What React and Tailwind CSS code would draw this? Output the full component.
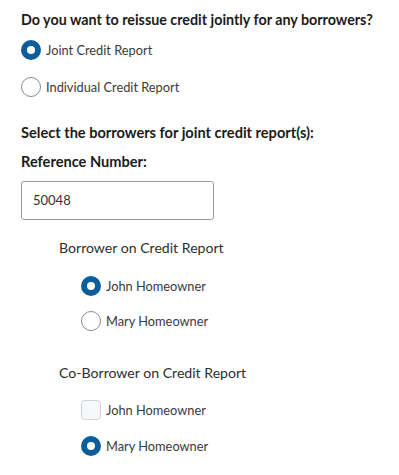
import React from "react";

const font = { fontFamily: "Lato, 'Noto Sans', sans-serif" };

function Radio({ checked }) {
  return checked ? (
    <span className="box-border inline-block h-[20px] w-[20px] shrink-0 rounded-full border-[6px] border-[#0b5e9b] bg-white" />
  ) : (
    <span className="box-border inline-block h-[20px] w-[20px] shrink-0 rounded-full border border-[#8a8a8a] bg-white" />
  );
}

function Checkbox() {
  return <span className="box-border inline-block h-[20px] w-[20px] shrink-0 rounded-[4px] border border-[#cfd3d8] bg-[#f7f8fa]" />;
}

function Option({ control, label, className }) {
  return (
    <div className={"flex h-[20px] items-center gap-[5px] " + className}>
      {control}
      <span className="text-[12.8px] leading-[20px] text-[#3a3a3a]">{label}</span>
    </div>
  );
}

export default function App() {
  return (
    <div className="h-[475px] w-[399px] bg-white pl-[21px]" style={font}>
      <div className="flex flex-col pt-[10px]">
        <div className="h-[20px] text-[14.3px] font-bold leading-[20px] text-[#1b1b1b]">
          Do you want to reissue credit jointly for any borrowers?
        </div>
        <Option className="mt-[10px]" control={<Radio checked />} label="Joint Credit Report" />
        <Option className="mt-[17px]" control={<Radio />} label="Individual Credit Report" />
        <div className="mt-[26px] h-[20px] text-[14.6px] font-bold leading-[20px] text-[#1b1b1b]">
          Select the borrowers for joint credit report(s):
        </div>
        <div className="mt-[9px] h-[20px] text-[14.6px] font-bold leading-[20px] text-[#1b1b1b]">
          Reference Number:
        </div>
        <div className="mt-[9px] box-border flex h-[39px] w-[193px] items-center rounded-[3px] border border-[#9a9a9a] pl-[11px] text-[13px] text-[#333]">
          50048
        </div>
        <div className="ml-[38px] mt-[18px] h-[20px] text-[14.1px] leading-[20px] text-[#2e2e2e]">
          Borrower on Credit Report
        </div>
        <Option className="ml-[60px] mt-[18px]" control={<Radio checked />} label="John Homeowner" />
        <Option className="ml-[60px] mt-[15px]" control={<Radio />} label="Mary Homeowner" />
        <div className="ml-[38px] mt-[32px] h-[20px] text-[14.1px] leading-[20px] text-[#2e2e2e]">
          Co-Borrower on Credit Report
        </div>
        <Option className="ml-[60px] mt-[17px]" control={<Checkbox />} label="John Homeowner" />
        <Option className="ml-[60px] mt-[16px]" control={<Radio checked />} label="Mary Homeowner" />
      </div>
    </div>
  );
}
